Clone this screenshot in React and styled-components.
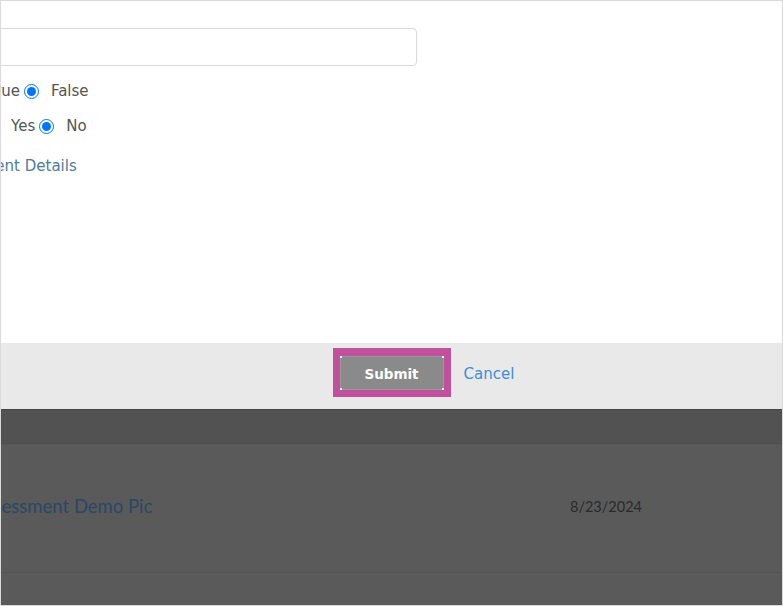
import React from "react";
import styled, { createGlobalStyle } from "styled-components";

const Global = createGlobalStyle`
  html, body { margin: 0; padding: 0; background: #ffffff; }
  body { font-family: "DejaVu Sans", Verdana, sans-serif; }
`;

const Frame = styled.div`
  width: 783px;
  height: 606px;
  box-sizing: border-box;
  border: 1px solid #dadada;
  overflow: hidden;
  display: flex;
  flex-direction: column;
`;

const FormArea = styled.section`
  height: 342px;
  background: #ffffff;
  padding-top: 27px;
  box-sizing: border-box;
  display: flex;
  flex-direction: column;
  align-items: flex-start;
`;

const TextInput = styled.input`
  box-sizing: border-box;
  margin-left: -220px;
  width: 636px;
  height: 38px;
  border: 1px solid #d9d9d9;
  border-radius: 4px;
  background: #fff;
  outline: none;
  font: inherit;
`;

const RadioRow = styled.div`
  display: flex;
  align-items: center;
  margin-left: ${(p) => p.$shift}px;
  margin-top: ${(p) => p.$top}px;
  height: 20px;
  font-size: 15px;
  color: #555555;
`;

const Radio = styled.input.attrs({ type: "radio", readOnly: true })`
  width: 15px;
  height: 15px;
  margin: 0 12px 0 0;
  accent-color: #0075ff;
`;

const RadioLabel = styled.span`
  margin-right: 4px;
  white-space: nowrap;
`;

const DetailsLink = styled.a`
  margin-left: ${(p) => p.$shift}px;
  margin-top: 21px;
  font-size: 15px;
  color: #4c7c9b;
  text-decoration: none;
  white-space: nowrap;
`;

const Footer = styled.footer`
  height: 66px;
  background: #e9e9e9;
  display: grid;
  grid-template-columns: 1fr auto 1fr;
  align-items: start;
  padding-top: 5px;
  box-sizing: border-box;
`;

const Highlight = styled.div`
  grid-column: 2;
  border: 7px solid #c1519c;
  border-top-width: 8px;
  display: flex;
`;

const SubmitButton = styled.button`
  position: relative;
  width: 104px;
  height: 34px;
  border: 1px solid #999999;
  background: #8a8a8a;
  color: #ffffff;
  font-family: "DejaVu Sans", Verdana, sans-serif;
  font-weight: bold;
  font-size: 13.5px;
  padding: 2px 0 0;
  margin: 0;
`;

const Handle = styled.span`
  position: absolute;
  width: 2px;
  height: 2px;
  background: #f2f2f2;
  ${(p) => (p.$v === "t" ? "top: -1px;" : "bottom: -1px;")}
  ${(p) => (p.$h === "l" ? "left: -1px;" : "right: -1px;")}
`;

const CancelLink = styled.a`
  grid-column: 3;
  justify-self: start;
  margin-left: 13px;
  margin-top: 17px;
  font-size: 15px;
  color: #3c8fd2;
  text-decoration: none;
`;

const Overlay = styled.section`
  flex: 1;
  background: #5a5a5a;
  border-top: 1px solid #464646;
  display: flex;
  flex-direction: column;
`;

const HeaderBand = styled.div`
  height: 33px;
  background: #525252;
  border-bottom: 1px solid #4e4e4e;
`;

const DataRow = styled.div`
  height: 128px;
  display: grid;
  grid-template-columns: 569px 1fr;
  align-items: center;
  border-bottom: 1px solid #545454;
`;

const DocTitle = styled.span`
  margin-left: ${(p) => p.$shift}px;
  font-family: Lato, "Open Sans", sans-serif;
  font-size: 18.5px;
  color: #294766;
  white-space: nowrap;
  padding-bottom: 5px;
`;

const DateCell = styled.span`
  font-family: Lato, "Open Sans", sans-serif;
  font-size: 14.5px;
  color: #2a2a2a;
  padding-bottom: 4px;
`;

export default function App() {
  return (
    <>
      <Global />
      <Frame>
        <FormArea>
          <TextInput />
          <RadioRow $shift={-40} $top={15}>
            <Radio name="tf" />
            <RadioLabel>True</RadioLabel>
            <Radio name="tf" checked />
            <RadioLabel>False</RadioLabel>
          </RadioRow>
          <RadioRow $shift={-17} $top={15}>
            <Radio name="yn" />
            <RadioLabel>Yes</RadioLabel>
            <Radio name="yn" checked />
            <RadioLabel>No</RadioLabel>
          </RadioRow>
          <DetailsLink href="#" $shift={-71}>
            Assessment Details
          </DetailsLink>
        </FormArea>
        <Footer>
          <Highlight>
            <SubmitButton>
              Submit
              <Handle $v="t" $h="l" />
              <Handle $v="t" $h="r" />
              <Handle $v="b" $h="l" />
              <Handle $v="b" $h="r" />
            </SubmitButton>
          </Highlight>
          <CancelLink href="#">Cancel</CancelLink>
        </Footer>
        <Overlay>
          <HeaderBand />
          <DataRow>
            <DocTitle $shift={-28}>Assessment Demo Pic</DocTitle>
            <DateCell>8/23/2024</DateCell>
          </DataRow>
        </Overlay>
      </Frame>
    </>
  );
}
